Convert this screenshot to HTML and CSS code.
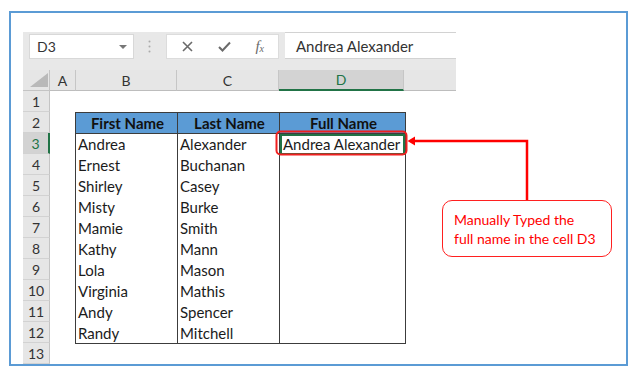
FILE: index.html
```html
<!DOCTYPE html>
<html lang="en">
<head>
    <meta charset="UTF-8">
    <title>Manually Typed Full Name</title>
    <link rel="stylesheet" href="styles.css">
</head>
<body>
    <div class="frame">
        <div class="excel">
            <div class="toolbar">
                <div class="namebox">
                    <span>D3</span>
                    <svg class="caret" width="8" height="4" viewBox="0 0 8 4"><path d="M0 0 H8 L4 4 Z" fill="#777"/></svg>
                </div>
                <div class="grip">
                    <svg width="3" height="13" viewBox="0 0 3 13"><circle cx="1.5" cy="1.5" r="1" fill="#aaa"/><circle cx="1.5" cy="6.5" r="1" fill="#aaa"/><circle cx="1.5" cy="11.5" r="1" fill="#aaa"/></svg>
                </div>
                <div class="fx-buttons">
                    <svg width="11" height="11" viewBox="0 0 11 11"><path d="M1 1 L10 10 M10 1 L1 10" stroke="#6a6a6a" stroke-width="1.6"/></svg>
                    <svg width="13" height="11" viewBox="0 0 13 11"><path d="M1 6 L4.5 9.5 L12 1.5" stroke="#6a6a6a" stroke-width="2" fill="none"/></svg>
                    <span class="fx">f<sub>x</sub></span>
                </div>
                <div class="formula">Andrea Alexander</div>
            </div>

            <div class="sheet">
                <div class="corner">
                    <svg width="18" height="14" viewBox="0 0 18 14"><path d="M18 0 V14 H0 Z" fill="#b9b9b9"/></svg>
                </div>
                <div class="col-head">A</div>
                <div class="col-head">B</div>
                <div class="col-head">C</div>
                <div class="col-head active">D</div>
                <div class="col-head blank"></div>

                <div class="row-head">1</div>
                <div class="row-head">2</div>
                <div class="row-head active">3</div>
                <div class="row-head">4</div>
                <div class="row-head">5</div>
                <div class="row-head">6</div>
                <div class="row-head">7</div>
                <div class="row-head">8</div>
                <div class="row-head">9</div>
                <div class="row-head">10</div>
                <div class="row-head">11</div>
                <div class="row-head">12</div>
                <div class="row-head">13</div>

                <table class="data">
                    <colgroup><col class="c-first"><col class="c-last"><col class="c-full"></colgroup>
                    <tr><th>First Name</th><th>Last Name</th><th>Full Name</th></tr>
                    <tr><td>Andrea</td><td>Alexander</td><td class="selected">Andrea Alexander</td></tr>
                    <tr><td>Ernest</td><td>Buchanan</td><td></td></tr>
                    <tr><td>Shirley</td><td>Casey</td><td></td></tr>
                    <tr><td>Misty</td><td>Burke</td><td></td></tr>
                    <tr><td>Mamie</td><td>Smith</td><td></td></tr>
                    <tr><td>Kathy</td><td>Mann</td><td></td></tr>
                    <tr><td>Lola</td><td>Mason</td><td></td></tr>
                    <tr><td>Virginia</td><td>Mathis</td><td></td></tr>
                    <tr><td>Andy</td><td>Spencer</td><td></td></tr>
                    <tr><td>Randy</td><td>Mitchell</td><td></td></tr>
                </table>
            </div>
        </div>

        <!-- annotation drawn over the sheet, page coordinates -->
        <svg class="marks" width="615" height="351" viewBox="11 13 615 351">
            <rect x="276.5" y="131.5" width="130" height="23" rx="4" fill="none" stroke="#f01f1f" stroke-width="2"/>
            <path d="M527 200 V141 H413" fill="none" stroke="#ff0000" stroke-width="2.5"/>
            <path d="M407.5 141 L415 136.5 L415 145.5 Z" fill="#ff0000"/>
        </svg>
        <div class="callout">Manually Typed the<br>full name in the cell D3</div>
    </div>
</body>
</html>
```

FILE: styles.css
```css
body {
    margin: 0;
    background: #ffffff;
    font-family: Lato, 'Liberation Sans', sans-serif;
    color: #1b1b1b;
}
.frame {
    position: relative;
    margin: 11px 0 0 9px;
    width: 615px;
    height: 351px;
    border: 2px solid #5b9bd5;
    overflow: hidden;
    background: #ffffff;
}
.excel {
    margin: 19px 0 0 12px;
    width: 433px;
}
.toolbar {
    display: flex;
    align-items: flex-start;
    height: 38px;
    background: #e8e8e8;
}
.namebox {
    box-sizing: border-box;
    margin: 2px 0 0 6px;
    width: 105px;
    height: 25px;
    padding: 0 6px 0 7px;
    display: flex;
    align-items: center;
    justify-content: space-between;
    background: #ffffff;
    border: 1px solid #d8d8d8;
    font-size: 14px;
    color: #333333;
}
.grip {
    width: 33px;
    height: 29px;
    display: flex;
    align-items: center;
    justify-content: center;
    margin-left: -1px;
}
.fx-buttons {
    box-sizing: border-box;
    margin-top: 2px;
    width: 113px;
    height: 25px;
    padding: 0 14px 0 15px;
    display: flex;
    align-items: center;
    justify-content: space-between;
    background: #ffffff;
    border: 1px solid #dcdcdc;
}
.fx {
    font-family: 'Liberation Serif', serif;
    font-style: italic;
    font-size: 15px;
    color: #6a6a6a;
    line-height: 1;
}
.fx sub {
    font-size: 10px;
    vertical-align: -1px;
}
.formula {
    box-sizing: border-box;
    margin-left: 6px;
    flex: 1;
    height: 27px;
    padding: 1px 0 0 11px;
    display: flex;
    align-items: center;
    background: #ffffff;
    border-top: 1px solid #d2d2d2;
    border-bottom: 1px solid #d2d2d2;
    font-size: 15px;
    color: #333333;
}
.sheet {
    display: grid;
    grid-template-columns: 27px 26px 101px 102px 125px 52px;
    grid-template-rows: repeat(14, 21px);
}
.corner {
    background: #e6e6e6;
    border-bottom: 1px solid #c4c4c4;
    border-right: 1px solid #c4c4c4;
    display: flex;
    align-items: flex-end;
    justify-content: flex-end;
    padding: 0 1px 3px 0;
    box-sizing: border-box;
}
.col-head {
    box-sizing: border-box;
    display: flex;
    align-items: center;
    justify-content: center;
    background: #e6e6e6;
    border-right: 1px solid #c6c6c6;
    border-bottom: 1px solid #bdbdbd;
    font-size: 14px;
    color: #333333;
}
.col-head.active {
    background: #d3d3d3;
    color: #217346;
    border-bottom: 2px solid #217346;
}
.col-head.blank {
    border-right: none;
}
.row-head {
    grid-column: 1;
    box-sizing: border-box;
    display: flex;
    align-items: center;
    justify-content: center;
    background: #e6e6e6;
    border-right: 1px solid #c4c4c4;
    border-bottom: 1px solid #d2d2d2;
    font-size: 14px;
    color: #333333;
}
.row-head.active {
    background: #d3d3d3;
    color: #217346;
    border-right: 2px solid #217346;
}
.data {
    grid-column: 3 / 6;
    grid-row: 3 / 14;
    align-self: start;
    margin-left: -1px;
    border-collapse: collapse;
    table-layout: fixed;
    width: 330px;
    font-size: 15px;
}
.c-first { width: 102px; }
.c-last { width: 102px; }
.c-full { width: 126px; }
.data th,
.data td {
    padding: 0 0 0 2px;
    border-left: 1px solid #3c3c3c;
    border-right: 1px solid #3c3c3c;
    white-space: nowrap;
    overflow: hidden;
    line-height: 21px;
}
.data th {
    background: #5b9bd5;
    border: 1px solid #3c3c3c;
    line-height: 20px;
    text-align: center;
    font-weight: 700;
    color: #111111;
}
.data tr:last-child td {
    border-bottom: 1px solid #3c3c3c;
    line-height: 20px;
}
.data td.selected {
    position: relative;
    box-shadow: inset 0 0 0 2px #217346;
    padding-left: 3px;
}
.marks {
    position: absolute;
    left: 0;
    top: 0;
}
.callout {
    position: absolute;
    left: 431px;
    top: 187px;
    box-sizing: border-box;
    width: 170px;
    height: 57px;
    padding: 0 0 0 11px;
    display: flex;
    align-items: center;
    background: #ffffff;
    border: 1.5px solid #ff2020;
    border-radius: 10px;
    font-size: 14px;
    line-height: 19px;
    color: #ff0000;
}
```
